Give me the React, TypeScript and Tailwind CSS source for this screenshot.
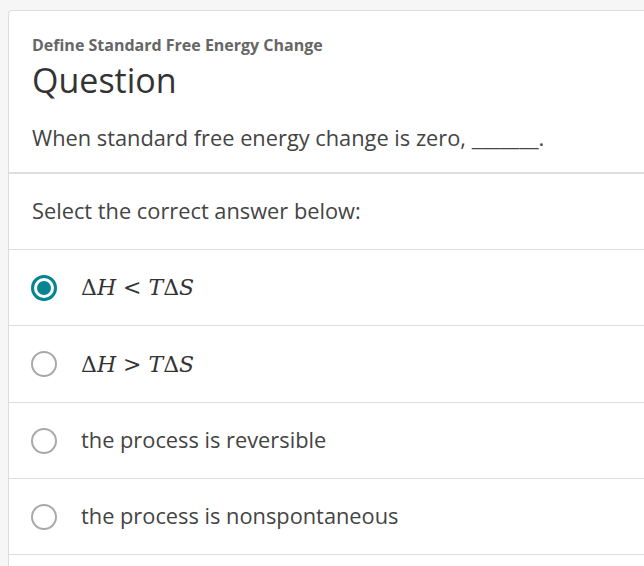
import React from "react";

const Radio = ({ checked }: { checked?: boolean }) =>
  checked ? (
    <span className="flex h-[26px] w-[26px] shrink-0 items-center justify-center rounded-full border-[3px] border-[#078491]">
      <span className="h-[14px] w-[14px] rounded-full bg-[#078491]" />
    </span>
  ) : (
    <span className="h-[26px] w-[26px] shrink-0 rounded-full border-2 border-[#a9a9a9]" />
  );

const Math = ({ op }: { op: string }) => (
  <span
    className="text-[22px] leading-[28px] text-[#333]"
    style={{ fontFamily: '"DejaVu Serif", "Liberation Serif", serif' }}
  >
    <span>Δ</span>
    <i>H</i>
    <span className="px-[7px]">{op}</span>
    <i>T</i>
    <span>Δ</span>
    <i>S</i>
  </span>
);

const Row = ({
  checked,
  tall,
  children,
}: {
  checked?: boolean;
  tall?: boolean;
  children: React.ReactNode;
}) => (
  <div
    className={
      tall
        ? "flex h-[77px] items-center gap-[24px] border-b border-[#dedede] pl-[22px]"
        : "flex h-[76px] items-center gap-[24px] border-b border-[#dedede] pl-[22px]"
    }
  >
    <Radio checked={checked} />
    <div className="text-[21.8px] text-[#444]">{children}</div>
  </div>
);

export default function App() {
  return (
    <div
      className="h-[566px] w-[644px] overflow-hidden bg-[#f6f6f6] pl-[8px] pt-[10px]"
      style={{ fontFamily: '"Open Sans", "Noto Sans", sans-serif' }}
    >
      <div className="h-[600px] w-[700px] rounded-tl-[4px] border-l border-t border-[#dcdcdc] bg-white">
        <div className="px-[23px] pt-[23px]">
          <div className="text-[16px] font-bold leading-[22px] text-[#666]">
            Define Standard Free Energy Change
          </div>
          <div className="mt-[2px] text-[34px] leading-[44px] text-[#333]">Question</div>
          <div className="mt-[21px] pb-[19px] text-[21.8px] leading-[30px] text-[#444]">
            When standard free energy change is zero, _______.
          </div>
        </div>
        <div className="h-[2px] bg-[#dedede]" />
        <div className="flex h-[76px] items-center border-b border-[#dedede] pl-[23px] text-[21.8px] text-[#444]">
          Select the correct answer below:
        </div>
        <Row checked>
          <Math op="<" />
        </Row>
        <Row tall>
          <Math op=">" />
        </Row>
        <Row>the process is reversible</Row>
        <Row>the process is nonspontaneous</Row>
      </div>
    </div>
  );
}
